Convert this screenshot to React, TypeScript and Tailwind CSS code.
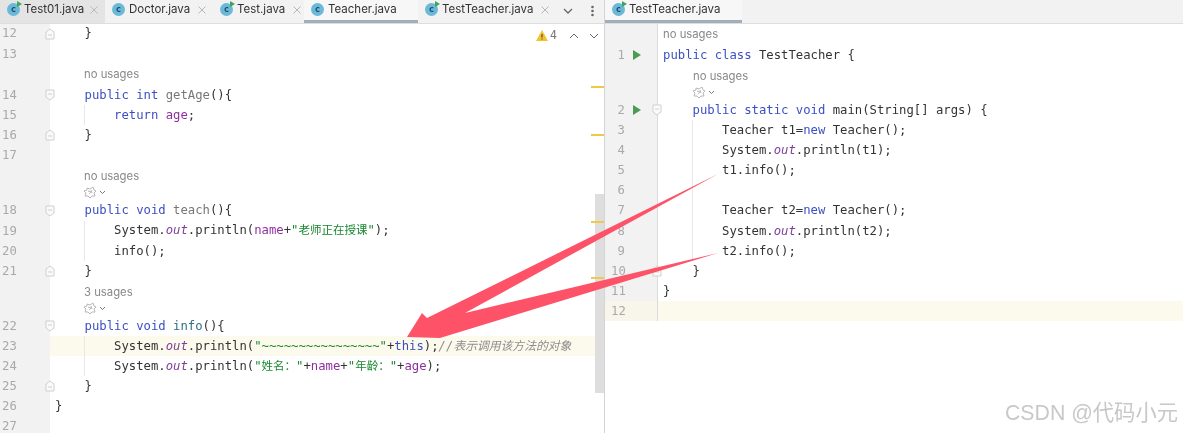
import type { ReactNode } from "react";

const sans = "font-['Inter','Noto_Sans','Noto_Sans_CJK_SC',sans-serif]";

const KW = ({ children }: { children: ReactNode }) => <span className="text-[#3b4fc4]">{children}</span>;
const Field = ({ children }: { children: ReactNode }) => <span className="text-[#8f2f9f]">{children}</span>;
const Str = ({ children }: { children: ReactNode }) => <span className="text-[#19872f]">{children}</span>;
const Cjk = ({ children }: { children: ReactNode }) => <span className="text-[11.5px]">{children}</span>;
const Out = () => <span className="text-[#7f3f98] italic">out</span>;
const Dim = ({ children }: { children: ReactNode }) => <span className="text-[#777]">{children}</span>;

function JavaIcon({ run }: { run?: boolean }) {
  return (
    <span className="relative flex h-[13px] w-[13px] shrink-0 items-center justify-center rounded-full bg-[#6cb8d8] text-[9px] font-bold leading-none text-[#1d4f66]">
      c
      {run && <span className="absolute -right-[2px] -top-[2px] h-0 w-0 border-y-[3px] border-l-[5px] border-y-transparent border-l-[#3fa45b]" />}
    </span>
  );
}

function CloseIcon({ className }: { className: string }) {
  return (
    <svg width="8" height="8" viewBox="0 0 8 8" fill="none" stroke="#b8b8b8" strokeWidth="1" className={className}>
      <path d="M.5.5l7 7M7.5.5l-7 7" />
    </svg>
  );
}

function Tab({ name, run, active, gray, width }: { name: string; run?: boolean; active?: boolean; gray?: boolean; width: string }) {
  return (
    <div
      className={`flex h-full items-center gap-[4px] border-b-[3px] pl-[7px] ${width} ${active ? "border-[#a3adbb] bg-[#f7f7f7]" : gray ? "border-transparent bg-[#e4e4e4]" : "border-transparent"}`}
    >
      <JavaIcon run={run} />
      <span className={`${sans} text-[11.5px] text-[#333]`}>{name}</span>
      {!active && <CloseIcon className={gray ? "ml-[2px]" : "ml-[4px]"} />}
    </div>
  );
}

function LensIcon() {
  return (
    <svg width="22" height="13" viewBox="0 0 22 13" fill="none" stroke="#b8b8b8" strokeWidth="1">
      <path d="M3 2l3 1 3-2 1 3 2 1-2 2 1 3-3 0-2 2-2-2-3 0 1-3-2-2 3-1z" />
      <path d="M4 5l3 1-2 2M7 4l1 3" />
      <path d="M16 5l2.5 2.5L21 5" stroke="#777" />
    </svg>
  );
}

function Fold({ end }: { end?: boolean }) {
  return (
    <svg width="10" height="12" viewBox="0 0 10 12" fill="#fafafa" stroke="#d0d0d0" className="absolute left-[-5px] top-1/2 -translate-y-1/2">
      <path d={end ? "M1 11V4l4-3 4 3v7z" : "M1 1v7l4 3 4-3V1z"} />
      <path d={end ? "M3 7h4" : "M3 5h4"} />
    </svg>
  );
}

function Row({
  n,
  h = "h-[20.1px]",
  fold,
  run,
  right,
  hl,
  guide,
  children,
}: {
  n?: number;
  h?: string;
  fold?: "start" | "end";
  run?: boolean;
  right?: boolean;
  hl?: boolean;
  guide?: boolean;
  children?: ReactNode;
}) {
  return (
    <div className={`flex ${h} shrink-0 items-center`}>
      <div className={`relative flex h-full shrink-0 items-center ${right ? "w-[53px] border-r border-[#dcdcdc] pl-[6px]" : "w-[50px] pl-[2px]"} ${right && hl ? "bg-[#f8f6ea]" : "bg-[#f2f2f2]"}`}>
        <span className={`w-[14px] text-[#a9a9a9] ${right ? "text-right" : ""}`}>{n}</span>
        {run && <span className="ml-[8px] h-0 w-0 border-y-[5px] border-l-[8px] border-y-transparent border-l-[#499c54]" />}
        {fold && (
          <span className="absolute right-0 top-0 h-full">
            <Fold end={fold === "end"} />
          </span>
        )}
      </div>
      <div className={`relative flex h-full min-w-0 flex-1 items-center ${right ? "pl-[5px]" : "pl-[5px]"} ${hl ? "bg-[#fcfaed]" : ""}`}>
        {guide && <span className="absolute left-[34px] top-0 h-full w-px bg-[#e8e8e8]" />}
        <span className="whitespace-pre">{children}</span>
      </div>
    </div>
  );
}

const Hint = ({ children, indent }: { children: ReactNode; indent: string }) => (
  <span className={`${sans} ${indent} inline-block text-[11.3px] text-[#888]`}>{children}</span>
);

const HINT_H = "h-[21.5px]";
const LENS_H = "h-[13.5px]";

function LeftEditor() {
  return (
    <div className="relative flex w-[604px] shrink-0 flex-col">
      <div className="flex h-[23.5px] shrink-0 items-stretch border-b border-[#dedede] bg-[#f2f2f2]">
        <Tab name="Test01.java" run gray width="w-[105px]" />
        <Tab name="Doctor.java" width="w-[108px]" />
        <Tab name="Test.java" run width="w-[91px]" />
        <Tab name="Teacher.java" active width="w-[114px]" />
        <Tab name="TestTeacher.java" run width="w-[133px]" />
        <div className="flex flex-1 items-center gap-[18px] pl-[12px]">
          <svg width="10" height="6" viewBox="0 0 10 6" fill="none" stroke="#666" strokeWidth="1.3"><path d="M1 1l4 4 4-4" /></svg>
          <svg width="3" height="12" viewBox="0 0 3 12" fill="#666"><circle cx="1.5" cy="2" r="1.3" /><circle cx="1.5" cy="6" r="1.3" /><circle cx="1.5" cy="10" r="1.3" /></svg>
        </div>
      </div>
      <div className="text-[#333]">
        <Row n={12} fold="end">{"    }"}</Row>
        <Row n={13} />
        <Row h={HINT_H}><Hint indent="ml-[29px]">no usages</Hint></Row>
        <Row n={14} fold="start"><KW>{"    public int "}</KW><Dim>getAge</Dim>{"(){"}</Row>
        <Row n={15} guide>{"        "}<KW>return </KW><Field>age</Field>;</Row>
        <Row n={16} fold="end">{"    }"}</Row>
        <Row n={17} />
        <Row h={HINT_H}><Hint indent="ml-[29px]">no usages</Hint></Row>
        <Row h={LENS_H}><span className="ml-[29px] inline-flex"><LensIcon /></span></Row>
        <Row n={18} fold="start"><KW>{"    public void "}</KW><Dim>teach</Dim>{"(){"}</Row>
        <Row n={19} guide>{"        System."}<Out />.println(<Field>name</Field>+<Str>"<Cjk>老师正在授课</Cjk>"</Str>);</Row>
        <Row n={20} guide>{"        info();"}</Row>
        <Row n={21} fold="end">{"    }"}</Row>
        <Row h={HINT_H}><Hint indent="ml-[29px]">3 usages</Hint></Row>
        <Row h={LENS_H}><span className="ml-[29px] inline-flex"><LensIcon /></span></Row>
        <Row n={22} fold="start"><KW>{"    public void "}</KW><span className="text-[#2f6f86]">info</span>{"(){"}</Row>
        <Row n={23} guide hl>{"        System."}<Out />.println(<Str>"~~~~~~~~~~~~~~~~"</Str>+<KW>this</KW>);<span className="italic text-[#8c8c8c]">//<span className="text-[11.8px]">表示调用该方法的对象</span></span></Row>
        <Row n={24} guide>{"        System."}<Out />.println(<Str>"<Cjk>姓名：</Cjk>"</Str>+<Field>name</Field>+<Str>"<Cjk>年龄：</Cjk>"</Str>+<Field>age</Field>);</Row>
        <Row n={25} fold="end">{"    }"}</Row>
        <Row n={26}>{"}"}</Row>
        <Row n={27} />
      </div>

      {/* warnings + scrollbar overlay */}
      <div className="absolute right-[5px] top-[30px] flex items-center gap-[6px] text-[11.5px] text-[#777]">
        <svg width="12" height="11" viewBox="0 0 12 11"><path d="M6 0l6 11H0z" fill="#f2c230" /><path d="M6 4v3.5M6 8.5v1" stroke="#333" /></svg>
        <span className="-ml-[4px]">4</span>
        <svg width="10" height="6" viewBox="0 0 10 6" fill="none" stroke="#666" className="ml-[6px]"><path d="M1 5l4-4 4 4" /></svg>
        <svg width="10" height="6" viewBox="0 0 10 6" fill="none" stroke="#666" className="ml-[4px]"><path d="M1 1l4 4 4-4" /></svg>
      </div>
      <div className="absolute right-0 top-[194px] h-[199px] w-[9px] bg-[#dedede]" />
      <div className="absolute right-0 top-[86px] h-[2px] w-[13px] bg-[#efc94c]" />
      <div className="absolute right-0 top-[134px] h-[2px] w-[13px] bg-[#efc94c]" />
      <div className="absolute right-0 top-[221px] h-[2px] w-[13px] bg-[#efc94c]" />
      <div className="absolute right-0 top-[277px] h-[2px] w-[13px] bg-[#efc94c]" />
    </div>
  );
}

function RightEditor() {
  return (
    <div className="flex min-w-0 flex-1 flex-col border-l border-[#d4d4d4]">
      <div className="flex h-[23.5px] shrink-0 items-stretch border-b border-[#dedede] bg-[#f2f2f2]">
        <Tab name="TestTeacher.java" run active width="w-[137px]" />
      </div>
      <div className="text-[#333]">
        <Row right h={HINT_H}><Hint indent="">no usages</Hint></Row>
        <Row n={1} right run><KW>public class </KW>TestTeacher {"{"}</Row>
        <Row right h={HINT_H}><Hint indent="ml-[30px]">no usages</Hint></Row>
        <Row right h={LENS_H}><span className="ml-[30px] inline-flex"><LensIcon /></span></Row>
        <Row n={2} right run fold="start"><KW>{"    public static void "}</KW>{"main(String[] args) {"}</Row>
        <Row n={3} right guide>{"        Teacher t1="}<KW>new </KW>Teacher();</Row>
        <Row n={4} right guide>{"        System."}<Out />.println(t1);</Row>
        <Row n={5} right guide>{"        t1.info();"}</Row>
        <Row n={6} right guide />
        <Row n={7} right guide>{"        Teacher t2="}<KW>new </KW>Teacher();</Row>
        <Row n={8} right guide>{"        System."}<Out />.println(t2);</Row>
        <Row n={9} right guide>{"        t2.info();"}</Row>
        <Row n={10} right fold="end">{"    }"}</Row>
        <Row n={11} right>{"}"}</Row>
        <Row n={12} right hl />
      </div>
    </div>
  );
}

export default function App() {
  return (
    <div className="relative flex h-[433px] w-[1183px] overflow-hidden bg-white font-['DejaVu_Sans_Mono','Noto_Sans_CJK_SC',monospace] text-[12.25px] leading-none blur-[0.4px]">
      <LeftEditor />
      <RightEditor />

      {/* annotation arrows */}
      <svg className="pointer-events-none absolute inset-0" width="1183" height="433" viewBox="0 0 1183 433">
        <path d="M407 337L422 313L427 318L718 174L465 313L718 253L440 338Z" fill="#fd5268" />
      </svg>

      <div className="absolute bottom-[9px] right-[5px] font-['Liberation_Sans','Noto_Sans_CJK_SC',sans-serif] text-[21.3px] text-[#c8c8c8]">CSDN @代码小元</div>
    </div>
  );
}
